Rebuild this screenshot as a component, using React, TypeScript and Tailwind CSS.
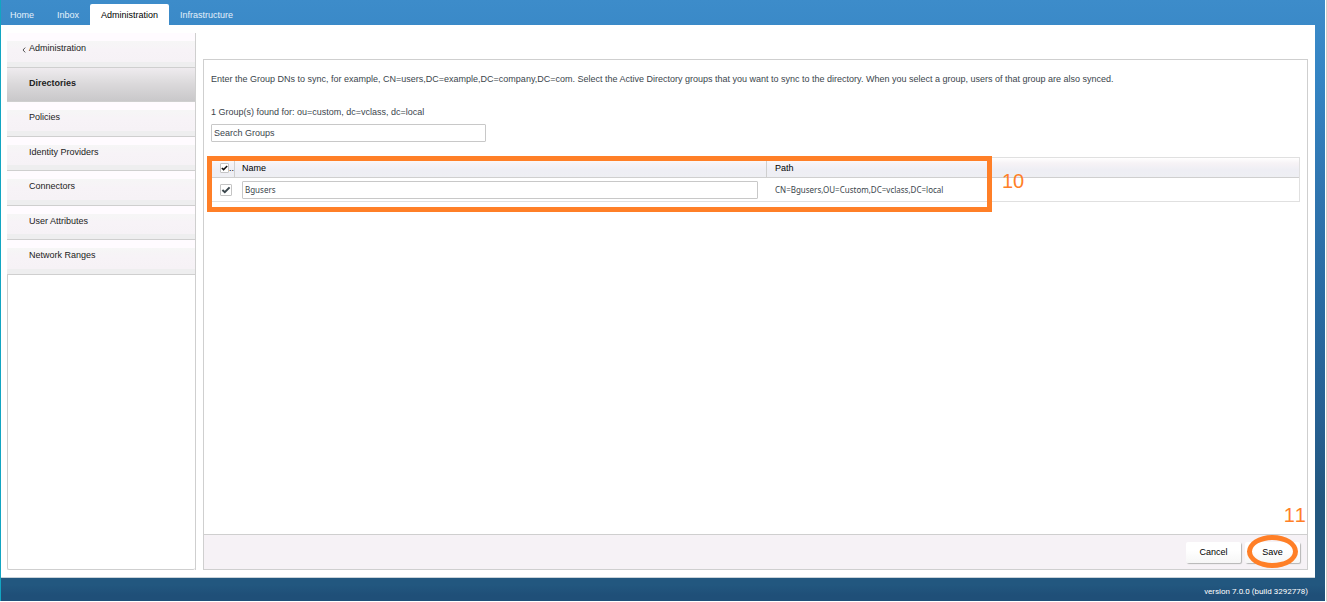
import { useState } from "react";

const tabs = ["Home", "Inbox", "Administration", "Infrastructure"];

const sections = [
  "Directories",
  "Policies",
  "Identity Providers",
  "Connectors",
  "User Attributes",
  "Network Ranges",
];

const itemBase =
  "flex items-center border-b border-[#cfcfcf] pl-[22px] pb-1 odd:h-[35px] even:h-[34px]";
const itemPlain =
  "bg-[linear-gradient(to_bottom,#fffbff_0,#fffbff_24%,#f6f6f6_24%,#f7f3f7_50%,#f6f2f6_84%,#eeeeef_84%,#eeeeef_100%)]";
const itemActive =
  "bg-[linear-gradient(to_bottom,#efebef_0,#e4e2e4_25%,#dad8da_50%,#c9c8ca_100%)] font-bold";

function Check({ label, small }: { label: string; small?: boolean }) {
  const [on, setOn] = useState(true);
  return (
    <span className={small ? "relative block size-[10px]" : "relative block size-[12px]"}>
      <input
        type="checkbox"
        aria-label={label}
        checked={on}
        onChange={() => setOn(!on)}
        className="block size-full appearance-none rounded-[1px] border border-[#c4c4c4] bg-white"
      />
      {on && (
        <svg
          viewBox="0 0 12 12"
          className="pointer-events-none absolute inset-0 size-full"
          fill="none"
          stroke={small ? "#111111" : "#3a464c"}
          strokeWidth="2"
        >
          <path d="M2.4 6 L4.8 8.2 L9.6 3.4" />
        </svg>
      )}
    </span>
  );
}

export default function App() {
  return (
    <div className="min-h-screen border-r border-b border-r-[#cfcfc8] border-b-white bg-white font-['Liberation_Sans',Arial,sans-serif] text-[9px] leading-3 text-[#222222]">
      <div className="flex min-h-[calc(100vh-1px)] flex-col border-r border-l border-r-white border-l-[#12a5c2] bg-[linear-gradient(to_bottom,#3d8cca_0,#3484c3_80px,#2f74ae_200px,#286ba2_300px,#266092_420px,#22577f_500px,#22577f_585px,#1f4f78_595px)]">
        <header>
          <nav className="flex h-[25px] items-end pl-[9px]" aria-label="Main">
            {tabs.map((t) => (
              <a
                key={t}
                href="#"
                aria-current={t === "Administration" ? "page" : undefined}
                className={
                  t === "Administration"
                    ? "rounded-t-[2px] bg-white px-[11px] pt-[5px] pb-1 text-black"
                    : "px-[11px] pt-[5px] pb-1 text-[#e4f1fb] first:pr-3 first:pl-0"
                }
              >
                {t}
              </a>
            ))}
          </nav>
        </header>

        <main className="mr-[10px] flex flex-1 gap-[7px] border-b border-[#c9d3da] bg-white pt-2 pr-[7px] pb-[7px] pl-[6px]">
          <aside className="flex w-[189px] shrink-0 flex-col border-r border-[#cfcfcf]">
            <nav aria-label="Administration">
              <a href="#" className={`${itemBase} ${itemPlain} relative`}>
                <svg
                  viewBox="0 0 4 6"
                  className="absolute top-[14px] left-[15px] h-[6px] w-[4px]"
                  fill="none"
                  stroke="#555555"
                >
                  <path d="M3.2 0.6 L1 3 L3.2 5.4" />
                </svg>
                Administration
              </a>
              {sections.map((s) => (
                <a
                  key={s}
                  href="#"
                  className={`${itemBase} ${s === "Directories" ? itemActive : itemPlain}`}
                >
                  {s}
                </a>
              ))}
            </nav>
            <div className="flex-1 rounded-b-[2px] border-b border-l border-[#cfcfcf]" />
          </aside>

          <section className="mt-[26px] flex min-w-0 flex-1 flex-col border border-[#cfcfcf] text-[#3b454c]">
            <div className="flex-1 px-[7px] pt-[13px]">
              <p>
                Enter the Group DNs to sync, for example, CN=users,DC=example,DC=company,DC=com.
                Select the Active Directory groups that you want to sync to the directory. When you
                select a group, users of that group are also synced.
              </p>
              <p className="mt-[21px]">1 Group(s) found for: ou=custom, dc=vclass, dc=local</p>
              <input
                type="text"
                aria-label="Search Groups"
                defaultValue="Search Groups"
                className="mt-[6px] block h-[18px] w-[275px] rounded-[1px] border border-[#c8c8c8] bg-white px-[2px]"
              />

              <div className="relative mt-[15px]">
                <table className="w-full table-fixed border-separate border-spacing-0 border border-[#e0e0e0] text-left">
                  <colgroup>
                    <col className="w-[23px]" />
                    <col className="w-[532px]" />
                    <col />
                  </colgroup>
                  <thead className="bg-[linear-gradient(to_bottom,#ffffff_0,#f7f3f6_25%,#eeeef4_60%,#eeeff3_100%)] text-black">
                    <tr>
                      <th className="h-5 border-r border-b border-[#cfcfcf] p-0 pl-2 font-normal">
                        <span className="flex items-center overflow-hidden">
                          <Check label="Select all groups" small />
                          <span aria-hidden="true">..</span>
                        </span>
                      </th>
                      <th className="border-r border-b border-[#cfcfcf] p-0 pl-[7px] font-normal">
                        Name
                      </th>
                      <th className="border-b border-[#cfcfcf] p-0 pl-2 font-normal">Path</th>
                    </tr>
                  </thead>
                  <tbody className="font-['Noto_Sans',Tahoma,sans-serif] text-[8px]">
                    <tr>
                      <td className="h-[23px] p-0 pl-2">
                        <Check label="Select Bgusers" />
                      </td>
                      <td className="p-0 pr-[9px] pl-[7px]">
                        <input
                          type="text"
                          aria-label="Group name"
                          defaultValue="Bgusers"
                          className="block h-[18px] w-full rounded-[1px] border border-[#c8c8c8] bg-white px-[2px]"
                        />
                      </td>
                      <td className="p-0 pl-2">CN=Bgusers,OU=Custom,DC=vclass,DC=local</td>
                    </tr>
                  </tbody>
                </table>
                <div className="pointer-events-none absolute -top-px -left-1 h-14 w-[785px] border-5 border-[#ff7f27]" />
                <span className="absolute top-3 left-[791px] text-[20px] leading-6 text-[#ff7f27]">
                  10
                </span>
              </div>
            </div>

            <footer className="relative flex h-[35px] items-center justify-end gap-1 border-t border-[#cfcfcf] bg-[#f6f2f6] pr-[7px] text-black">
              <button
                type="button"
                className="h-[21px] w-[55px] rounded-[2px] bg-[linear-gradient(to_bottom,#ffffff_40%,#f6f6f6_100%)] shadow-[1px_1px_1px_#b5b5b5]"
              >
                Cancel
              </button>
              <button
                type="button"
                className="h-[21px] w-[55px] rounded-[2px] bg-[linear-gradient(to_bottom,#ffffff_40%,#f6f6f6_100%)] shadow-[1px_1px_1px_#b5b5b5]"
              >
                Save
              </button>
              <div className="pointer-events-none absolute top-0 right-[9px] h-[33px] w-[51px] rounded-[50%] border-5 border-[#ff7f27]" />
              <span className="absolute -top-8 right-px text-[20px] leading-6 text-[#ff7f27] [font-kerning:none]">
                11
              </span>
            </footer>
          </section>
        </main>

        <div className="flex h-[23px] items-center justify-end pt-1 pr-[17px] font-['Roboto',Arial,sans-serif] text-[8px] text-white">
          version 7.0.0 (build 3292778)
        </div>
      </div>
    </div>
  );
}
